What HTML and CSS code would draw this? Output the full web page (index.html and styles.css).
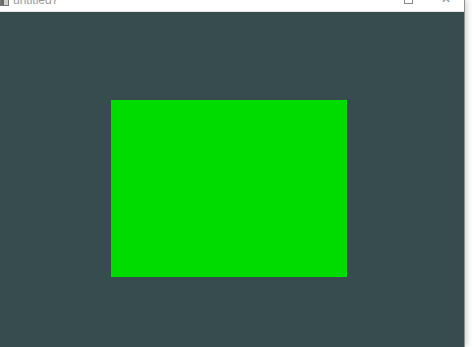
FILE: index.html
```html
<!DOCTYPE html>
<html>
<head>
<meta charset="utf-8">
<link rel="stylesheet" href="styles.css">
</head>
<body>
<div class="window">
  <div class="titlebar">
    <div class="title">
      <span class="app-icon"></span>
      <span class="title-text">untitled7</span>
    </div>
    <div class="controls">
      <span class="max"></span>
      <span class="close">&#x2715;</span>
    </div>
  </div>
  <div class="content">
    <div class="rect"></div>
  </div>
</div>
</body>
</html>
```
FILE: styles.css
```css
html, body {
  margin: 0;
  padding: 0;
  background: #ffffff;
  width: 474px;
  height: 347px;
  overflow: hidden;
}
.window {
  width: 464px;
  height: 347px;
  display: flex;
  flex-direction: column;
  box-shadow: 2px 0 6px rgba(0, 0, 0, 0.18);
  border-right: 1px solid #8a8f90;
}
.titlebar {
  height: 11px;
  background: #ffffff;
  border-bottom: 1px solid #e8e8e8;
  display: flex;
  justify-content: space-between;
  overflow: hidden;
  font-family: "Liberation Sans", "DejaVu Sans", sans-serif;
  font-size: 12px;
  color: #9a9a9a;
}
.title {
  display: flex;
  align-items: flex-start;
  margin-top: -7px;
}
.app-icon {
  width: 9px;
  height: 9px;
  margin-top: 4px;
  background: linear-gradient(90deg, #6a6a6a 0 45%, #d0d0d0 45% 100%);
  border: 1px solid #777;
  box-sizing: border-box;
}
.title-text {
  margin-left: 4px;
  line-height: 14px;
}
.controls {
  display: flex;
  align-items: flex-start;
  margin-top: -6px;
  margin-right: 13px;
}
.max {
  width: 7px;
  height: 8px;
  border: 1px solid #8a8a8a;
  margin-right: 28px;
}
.close {
  font-size: 12px;
  line-height: 10px;
  color: #8a8a8a;
}
.content {
  flex: 1;
  background: #364c4f;
  padding-top: 88px;
  padding-left: 111px;
}
.rect {
  width: 236px;
  height: 177px;
  background: #00dc00;
}
```
